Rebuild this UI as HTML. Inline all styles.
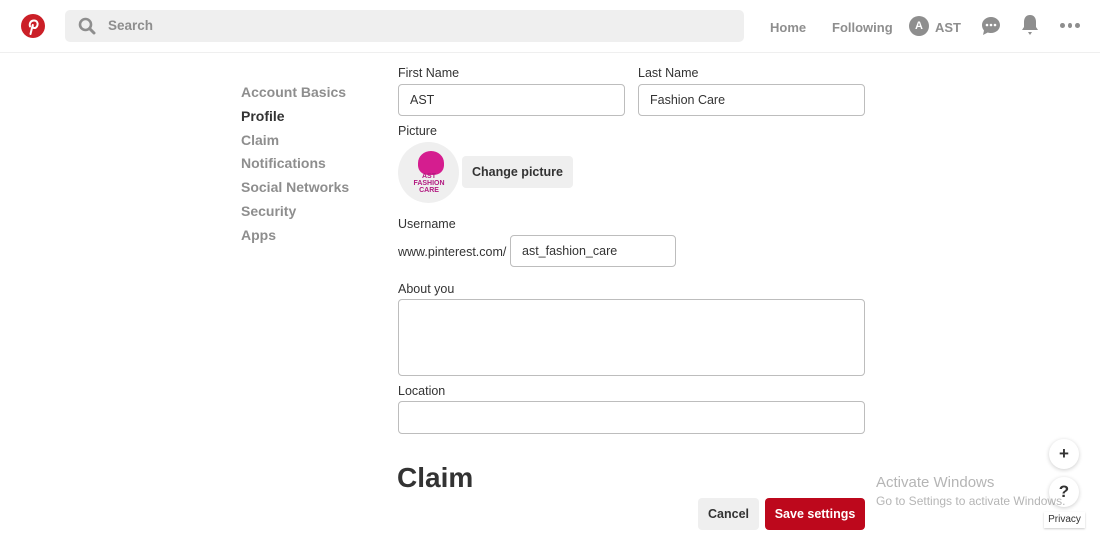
<!DOCTYPE html>
<html><head><style>
*{box-sizing:border-box;margin:0;padding:0}
body{width:1100px;height:535px;background:#fff;font-family:"Liberation Sans",sans-serif;position:relative;overflow:hidden;color:#333}
.a{position:absolute}
.hdr{left:0;top:0;width:1100px;height:53px;border-bottom:1px solid #efefef}
.search{left:65px;top:10px;width:679px;height:32px;background:#efefef;border-radius:5px}
.nav{font-weight:bold;font-size:13px;color:#8e8e8e}
.side{left:241px;font-weight:bold;font-size:14px;color:#8e8e8e}
.lbl{font-size:12.5px;color:#333}
.inp{border:1px solid #bdbdbd;border-radius:4px;background:#fff;font-size:12.5px;color:#333;padding-left:11px;display:flex;align-items:center}
.btn{background:#efefef;border-radius:4px;font-weight:bold;font-size:12.5px;display:flex;align-items:center;justify-content:center;color:#333}
.fab{width:30px;height:30px;border-radius:50%;background:#fff;box-shadow:0 1px 4px rgba(0,0,0,.2);display:flex;align-items:center;justify-content:center;font-weight:bold;font-size:17px;color:#333}
</style></head><body>
<div class="a hdr"></div>
<svg class="a" style="left:21px;top:14px" width="24" height="24" viewBox="0 0 24 24"><circle cx="12" cy="12" r="12" fill="#cb1f27"/><path d="M9.5 20 L11.6 11.5 M9 12.5 C8 9 10 6.5 13 6.5 C16 6.5 17 9 16.5 11 C16 13.5 14 14.5 12.5 13.8 C11.5 13.3 11.5 12 11.8 11" stroke="#fff" stroke-width="2" fill="none" stroke-linecap="round"/></svg>
<div class="a search"></div>
<svg class="a" style="left:78px;top:17px" width="18" height="18" viewBox="0 0 18 18"><circle cx="7.5" cy="7.5" r="5.5" stroke="#8e8e8e" stroke-width="2.6" fill="none"/><path d="M11.5 11.5 L16 16" stroke="#8e8e8e" stroke-width="3" stroke-linecap="round"/></svg>
<div class="a nav" style="left:108px;top:18px;font-size:13.5px">Search</div>
<div class="a nav" style="left:770px;top:20px">Home</div>
<div class="a nav" style="left:832px;top:20px">Following</div>
<div class="a" style="left:909px;top:16px;width:20px;height:20px;border-radius:50%;background:#8e8e8e;color:#fff;font-size:11px;font-weight:bold;text-align:center;line-height:20px">A</div>
<div class="a nav" style="left:935px;top:20px">AST</div>
<svg class="a" style="left:981px;top:16px" width="20" height="20" viewBox="0 0 20 20"><path d="M10 1 C15 1 19 4.5 19 9 C19 13.5 15 17 10 17 C8.8 17 7.8 16.8 6.8 16.5 L2 19 L3 14.5 C1.7 13 1 11 1 9 C1 4.5 5 1 10 1Z" fill="#8e8e8e"/><circle cx="6" cy="9" r="1.3" fill="#fff"/><circle cx="10" cy="9" r="1.3" fill="#fff"/><circle cx="14" cy="9" r="1.3" fill="#fff"/></svg>
<svg class="a" style="left:1020px;top:14px" width="20" height="22" viewBox="0 0 20 22"><path d="M10 1 C6 1 4 4 4 8 L4 13 L2 16 L18 16 L16 13 L16 8 C16 4 14 1 10 1Z" fill="#8e8e8e"/><path d="M8 18 L12 18 L10 21Z" fill="#8e8e8e"/></svg>
<div class="a" style="left:1060px;top:23px;width:20px;height:5px;display:flex;gap:3px"><span style="width:5px;height:5px;border-radius:50%;background:#8e8e8e"></span><span style="width:5px;height:5px;border-radius:50%;background:#8e8e8e"></span><span style="width:5px;height:5px;border-radius:50%;background:#8e8e8e"></span></div>

<div class="a side" style="top:84px">Account Basics</div>
<div class="a side" style="top:108px;color:#333">Profile</div>
<div class="a side" style="top:132px">Claim</div>
<div class="a side" style="top:155px">Notifications</div>
<div class="a side" style="top:179px">Social Networks</div>
<div class="a side" style="top:203px">Security</div>
<div class="a side" style="top:227px">Apps</div>

<div class="a lbl" style="left:398px;top:66px">First Name</div>
<div class="a lbl" style="left:638px;top:66px">Last Name</div>
<div class="a inp" style="left:398px;top:84px;width:227px;height:32px">AST</div>
<div class="a inp" style="left:638px;top:84px;width:227px;height:32px">Fashion Care</div>
<div class="a lbl" style="left:398px;top:124px">Picture</div>
<div class="a" style="left:398px;top:142px;width:61px;height:61px;border-radius:50%;background:#efefef"></div>
<div class="a" style="left:418px;top:151px;width:26px;height:24px;border-radius:50% 50% 40% 40%;background:#d51d8f"></div>
<div class="a" style="left:409px;top:173px;font-size:7px;font-weight:bold;color:#b21a80;line-height:7px;text-align:center;width:40px">AST<br>FASHION<br>CARE</div>
<div class="a btn" style="left:462px;top:156px;width:111px;height:32px">Change picture</div>
<div class="a lbl" style="left:398px;top:217px">Username</div>
<div class="a lbl" style="left:398px;top:245px">www.pinterest.com/</div>
<div class="a inp" style="left:510px;top:235px;width:166px;height:32px">ast_fashion_care</div>
<div class="a lbl" style="left:398px;top:282px">About you</div>
<div class="a inp" style="left:398px;top:299px;width:467px;height:77px"></div>
<div class="a lbl" style="left:398px;top:384px">Location</div>
<div class="a inp" style="left:398px;top:401px;width:467px;height:33px"></div>
<div class="a" style="left:397px;top:462px;font-size:28px;font-weight:bold;color:#333">Claim</div>
<div class="a btn" style="left:698px;top:498px;width:61px;height:32px">Cancel</div>
<div class="a btn" style="left:765px;top:498px;width:100px;height:32px;background:#bd081c;color:#fff">Save settings</div>
<div class="a" style="left:876px;top:474px;font-size:15px;color:#b5b5b5">Activate Windows</div>
<div class="a" style="left:876px;top:494px;font-size:12px;color:#b5b5b5">Go to Settings to activate Windows.</div>
<div class="a fab" style="left:1049px;top:439px">+</div>
<div class="a fab" style="left:1049px;top:477px;background:transparent">?</div>
<div class="a" style="left:1044px;top:512px;width:41px;height:16px;background:#fff;box-shadow:0 1px 2px rgba(0,0,0,.2);font-size:10px;text-align:center;line-height:16px;color:#333">Privacy</div>
</body></html>
